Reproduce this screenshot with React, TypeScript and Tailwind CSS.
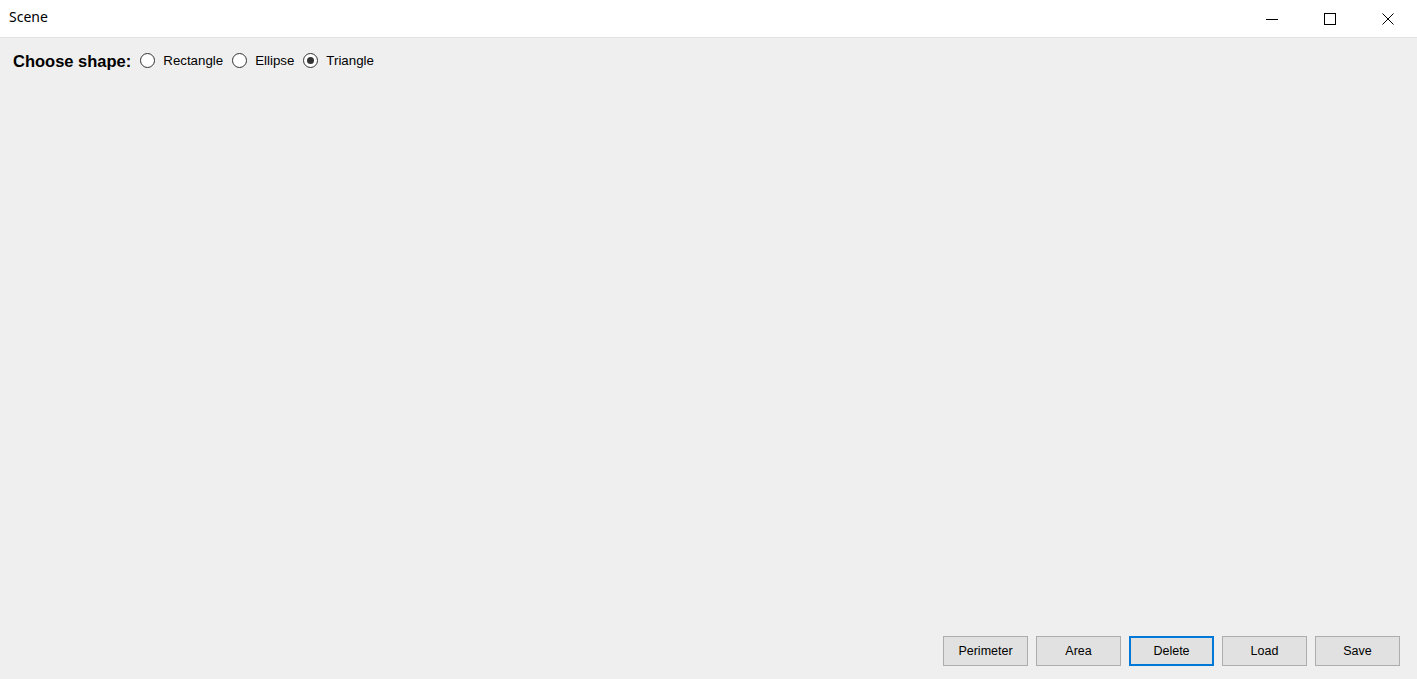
import { useState } from 'react'

const shapes = ['Rectangle', 'Ellipse', 'Triangle']
const buttons = ['Perimeter', 'Area', 'Delete', 'Load', 'Save']

const TitleBar = () => (
  <div className="flex h-[38px] items-start border-b border-[#e2e2e2] bg-white">
    <span className="pl-[9px] pt-[8px] font-['Noto_Sans',sans-serif] text-[14px] leading-[18px] text-black">
      Scene
    </span>
    <div className="ml-auto flex h-[37px]">
      <div className="flex w-[58px] items-center justify-center">
        <svg width="12" height="12" viewBox="0 0 12 12">
          <path d="M0 6.5h12" stroke="#000" strokeWidth="1" />
        </svg>
      </div>
      <div className="flex w-[58px] items-center justify-center">
        <svg width="12" height="12" viewBox="0 0 12 12">
          <rect x="0.5" y="0.5" width="11" height="11" fill="none" stroke="#000" strokeWidth="1" />
        </svg>
      </div>
      <div className="flex w-[58px] items-center justify-center">
        <svg width="12" height="12" viewBox="0 0 12 12">
          <path d="M0.5 0.5l11 11M11.5 0.5l-11 11" stroke="#000" strokeWidth="1" />
        </svg>
      </div>
    </div>
  </div>
)

const Radio = ({ label, checked, onClick }: { label: string; checked: boolean; onClick: () => void }) => (
  <button type="button" onClick={onClick} className="flex items-center">
    <span className="flex h-[15px] w-[15px] items-center justify-center rounded-full border border-[#333] bg-white">
      {checked && <span className="h-[7px] w-[7px] rounded-full bg-[#333]" />}
    </span>
    <span className="ml-[8px] text-[13.3px] text-black">{label}</span>
  </button>
)

export default function App() {
  const [shape, setShape] = useState('Triangle')

  return (
    <div className="flex h-screen flex-col bg-[#efefef] font-['Liberation_Sans',Arial,sans-serif]">
      <TitleBar />

      <main className="flex flex-1 flex-col">
        <div className="flex items-center pl-[13px] pt-[13px]">
          <span className="mr-[9px] text-[16.5px] font-bold leading-[16px] text-black">Choose shape:</span>
          <div className="flex items-center gap-[9px]">
            {shapes.map((s) => (
              <Radio key={s} label={s} checked={shape === s} onClick={() => setShape(s)} />
            ))}
          </div>
        </div>

        <div className="mt-auto flex justify-end gap-[8px] pb-[13px] pr-[17px]">
          {buttons.map((b) => (
            <button
              key={b}
              type="button"
              className={
                b === 'Delete'
                  ? 'h-[30px] w-[85px] border-2 border-[#0078d7] bg-[#e1e1e1] text-[12.5px] text-black'
                  : 'h-[30px] w-[85px] border border-[#adadad] bg-[#e1e1e1] text-[12.5px] text-black'
              }
            >
              {b}
            </button>
          ))}
        </div>
      </main>
    </div>
  )
}
